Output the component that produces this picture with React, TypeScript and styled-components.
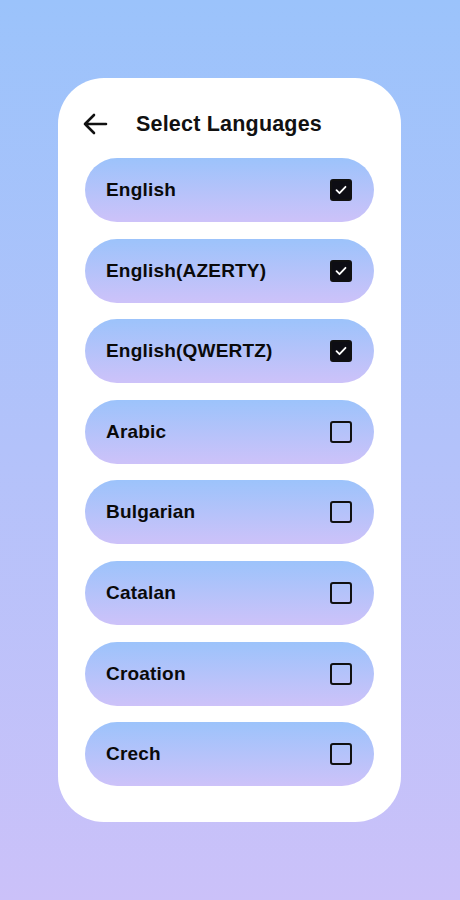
import styled, { createGlobalStyle } from 'styled-components';

const GlobalStyle = createGlobalStyle`
  html, body {
    margin: 0;
    padding: 0;
  }
  body {
    font-family: "Liberation Sans", Arial, sans-serif;
  }
`;

const Page = styled.div`
  width: 460px;
  height: 900px;
  background: linear-gradient(180deg, #9bc3fb 0%, #cbc1f9 100%);
  display: flex;
  justify-content: flex-start;
  padding: 78px 0 0 58px;
  box-sizing: border-box;
`;

const Card = styled.div`
  width: 343px;
  height: 744px;
  background: #ffffff;
  border-radius: 46px;
  padding: 22px 27px 0 27px;
  box-sizing: border-box;
  display: flex;
  flex-direction: column;
`;

const Header = styled.div`
  display: flex;
  align-items: center;
  height: 48px;
  margin-bottom: 10px;
`;

const BackButton = styled.button`
  background: none;
  border: none;
  padding: 0;
  margin-left: -4px;
  width: 28px;
  height: 28px;
  display: flex;
  align-items: center;
  cursor: pointer;
`;

const Title = styled.h1`
  margin: 0 0 0 27px;
  font-size: 21.5px;
  font-weight: 700;
  color: #111;
  letter-spacing: 0.2px;
`;

const List = styled.div`
  display: flex;
  flex-direction: column;
  gap: 16.6px;
`;

const Row = styled.div`
  height: 64px;
  border-radius: 32px;
  background: linear-gradient(180deg, #9cc3fb 0%, #cdc2f9 100%);
  display: flex;
  align-items: center;
  justify-content: space-between;
  padding: 0 22px 0 21px;
  box-sizing: border-box;
`;

const Label = styled.span`
  font-size: 19px;
  font-weight: 700;
  color: #0a0a0a;
  letter-spacing: 0.2px;
`;

const Box = styled.span<{ $checked: boolean }>`
  width: 22px;
  height: 22px;
  box-sizing: border-box;
  border-radius: 3px;
  border: 2px solid #111;
  background: ${(p) => (p.$checked ? '#0d0d14' : 'transparent')};
  display: flex;
  align-items: center;
  justify-content: center;
`;

const languages = [
  { name: 'English', checked: true },
  { name: 'English(AZERTY)', checked: true },
  { name: 'English(QWERTZ)', checked: true },
  { name: 'Arabic', checked: false },
  { name: 'Bulgarian', checked: false },
  { name: 'Catalan', checked: false },
  { name: 'Croation', checked: false },
  { name: 'Crech', checked: false },
];

function App() {
  return (
    <>
      <GlobalStyle />
      <Page>
        <Card>
          <Header>
            <BackButton>
              <svg width="28" height="28" viewBox="0 0 28 28" fill="none">
                <path d="M25 14H4M13 5l-9 9 9 9" stroke="#111" strokeWidth="2.6" strokeLinecap="round" strokeLinejoin="round" />
              </svg>
            </BackButton>
            <Title>Select Languages</Title>
          </Header>
          <List>
            {languages.map((l) => (
              <Row key={l.name}>
                <Label>{l.name}</Label>
                <Box $checked={l.checked}>
                  {l.checked && (
                    <svg width="12" height="10" viewBox="0 0 12 10" fill="none">
                      <path d="M1.5 5.2l3 3 6-6.4" stroke="#fff" strokeWidth="1.8" strokeLinecap="round" strokeLinejoin="round" />
                    </svg>
                  )}
                </Box>
              </Row>
            ))}
          </List>
        </Card>
      </Page>
    </>
  );
}

export default App;
